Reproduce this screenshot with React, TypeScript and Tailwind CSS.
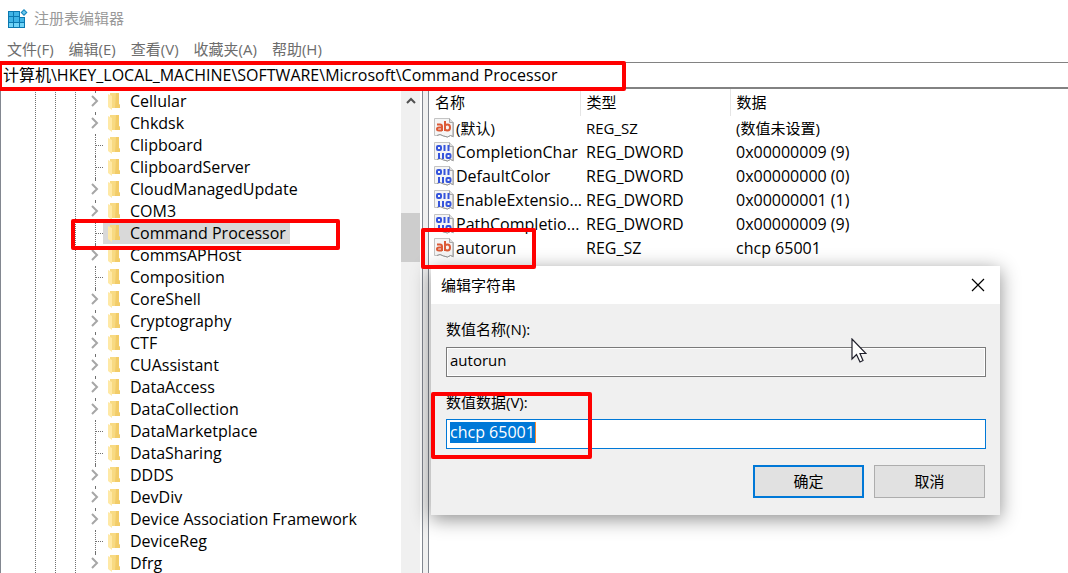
import React from 'react';

interface TreeKey {
  name: string;
  expandable: boolean;
  selected?: boolean;
}

interface RegistryValue {
  name: string;
  kind: 'string' | 'binary';
  type: string;
  data: string;
}

const menus = ['文件(F)', '编辑(E)', '查看(V)', '收藏夹(A)', '帮助(H)'];

const treeKeys: TreeKey[] = [
  { name: 'Cellular', expandable: true },
  { name: 'Chkdsk', expandable: true },
  { name: 'Clipboard', expandable: false },
  { name: 'ClipboardServer', expandable: false },
  { name: 'CloudManagedUpdate', expandable: true },
  { name: 'COM3', expandable: true },
  { name: 'Command Processor', expandable: false, selected: true },
  { name: 'CommsAPHost', expandable: true },
  { name: 'Composition', expandable: false },
  { name: 'CoreShell', expandable: true },
  { name: 'Cryptography', expandable: true },
  { name: 'CTF', expandable: true },
  { name: 'CUAssistant', expandable: true },
  { name: 'DataAccess', expandable: true },
  { name: 'DataCollection', expandable: true },
  { name: 'DataMarketplace', expandable: false },
  { name: 'DataSharing', expandable: false },
  { name: 'DDDS', expandable: true },
  { name: 'DevDiv', expandable: true },
  { name: 'Device Association Framework', expandable: true },
  { name: 'DeviceReg', expandable: false },
  { name: 'Dfrg', expandable: true },
];

const defaultValue: RegistryValue = { name: '(默认)', kind: 'string', type: 'REG_SZ', data: '(数值未设置)' };

const values: RegistryValue[] = [
  { name: 'CompletionChar', kind: 'binary', type: 'REG_DWORD', data: '0x00000009 (9)' },
  { name: 'DefaultColor', kind: 'binary', type: 'REG_DWORD', data: '0x00000000 (0)' },
  { name: 'EnableExtensio...', kind: 'binary', type: 'REG_DWORD', data: '0x00000001 (1)' },
  { name: 'PathCompletio...', kind: 'binary', type: 'REG_DWORD', data: '0x00000009 (9)' },
  { name: 'autorun', kind: 'string', type: 'REG_SZ', data: 'chcp 65001' },
];

const RegeditIcon = () => (
  <svg width="20" height="20" viewBox="0 0 20 20" className="shrink-0">
    <path d="M0 2h12v6h5v11H0z" fill="#0b78b0" />
    <g fill="#3fb4e6">
      <path d="M1 3h4v4H1zM6 3h5v4H6zM1 8h4v5H1zM6 8h5v5H6zM12 9h4v4h-4z" />
    </g>
    <g fill="#6fd3f7">
      <path d="M1 14h4v4H1zM6 14h5v4H6zM12 14h4v4h-4z" />
    </g>
    <path d="M16 0l3.500 3.500L16 7l-3.500-3.500z" fill="#1287c0" />
    <path d="M16 1.500l2 2-2 2-2-2z" fill="#6fc8ec" />
  </svg>
);

const FolderIcon = () => (
  <svg width="13" height="17" viewBox="0 0 13 17" className="shrink-0">
    <path d="M2 0h9v11l1 1v3H2z" fill="#f8da82" />
    <path d="M8 0h3v11l1 1v3H7z" fill="#f2cc68" />
    <path d="M0 1l4 2v14l-4-3z" fill="#ffe9a6" />
  </svg>
);

const ChevronIcon = () => (
  <svg width="8" height="12" viewBox="0 0 8 12" fill="none" stroke="#a6a6a6" strokeWidth="2">
    <path d="M1 1l5 5-5 5" />
  </svg>
);

const ValueIcon = ({ kind }: { kind: RegistryValue['kind'] }) => (
  <svg width="20" height="20" viewBox="0 0 20 20" className="shrink-0">
    <path d="M.5.5h15l4 4V19l-3-1.500-3 1.500-4-1L6 16.500l-3 1H.5z" fill="#f5f5f5" stroke="#c4c4c4" />
    <path d="M15.500.5v4h4" fill="#ddd" stroke="#a8a8a8" />
    <path d="M19 5v13.500l-2.500-1-3 1.500-4-1L6 16.500l-3 1" fill="none" stroke="#999" />
    {kind === 'string' ? (
      <g fill="none" stroke="#dc5a36" strokeWidth="2">
        <path d="M3 6.500h3q2 0 2 2V13M8 9.500H5q-2 0-2 1.500t2 1.500h3" />
        <path d="M11 3v10M11 7.500q1-1 2.500-1 2.500 0 2.500 3t-2.500 3q-1.500 0-2.500-1" />
      </g>
    ) : (
      <g fill="none" stroke="#3655dc" strokeWidth="2">
        <rect x="3" y="4" width="4" height="4" rx="1" />
        <path d="M10.500 3v6M14.500 3v6M5 11v6M9 11v6" />
        <rect x="12.500" y="12" width="4" height="4" rx="1" />
      </g>
    )}
  </svg>
);

const CursorIcon = () => (
  <svg width="16" height="25" viewBox="0 0 16 25" className="pointer-events-none absolute left-[420px] top-[72px]">
    <path
      d="M1 1v20l4.500-4.500L9 24l3-1.500L9 15.500h6z"
      fill="#fff"
      stroke="#1e1e2a"
      strokeWidth="1.200"
    />
  </svg>
);

// red frame laid over the part of the window it points out
const Highlight = ({ className }: { className: string }) => (
  <div className={`pointer-events-none absolute z-20 rounded-xs border-4 border-[#ff0000] ${className}`} />
);

const TreeRow = ({ item }: { item: TreeKey }) => (
  <li className="flex h-[22px] items-center pl-[90px]">
    <span className="relative flex h-full w-[12px] shrink-0 items-center">
      {item.expandable ? (
        <>
          <span className="absolute left-[4px] top-0 h-[2px] border-l border-dotted border-[#707070]" />
          <ChevronIcon />
        </>
      ) : (
        <>
          <span className="absolute left-[4px] top-0 h-full border-l border-dotted border-[#707070]" />
          <span className="absolute left-[5px] w-[7px] border-t border-dotted border-[#707070]" />
        </>
      )}
    </span>
    <span className={`flex h-full items-center gap-[9px] pl-[5px] pr-1 ${item.selected ? 'bg-[#d9d9d9]' : ''}`}>
      <FolderIcon />
      {item.name}
    </span>
  </li>
);

const KeyTree = () => (
  <div className="flex w-[423px] shrink-0 overflow-hidden border-x border-[#828790] bg-white">
    <div className="relative min-w-0 flex-1">
      <div className="absolute inset-y-0 left-[34px] w-[41px] border-x border-dotted border-[#707070]" />
      <div className="absolute inset-y-0 left-[54px] border-l border-dotted border-[#707070]" />
      <ul className="relative pt-[1px] text-base leading-[22px]">
        {treeKeys.map((item) => (
          <TreeRow key={item.name} item={item} />
        ))}
      </ul>
    </div>
    <div className="mr-[2px] flex w-[19px] flex-col items-center bg-[#f0f0f0]">
      <svg width="10" height="20" viewBox="0 0 10 20" fill="none" stroke="#505050" strokeWidth="2">
        <path d="M1 14l4-4 4 4" />
      </svg>
      <div className="mt-[104px] h-[49px] w-full bg-[#cdcdcd]" />
    </div>
  </div>
);

const ValueRow = ({ value }: { value: RegistryValue }) => (
  <tr className="h-[24px]">
    <td className="pl-[5px]">
      <div className="flex items-center gap-[2px] whitespace-nowrap">
        <ValueIcon kind={value.kind} />
        {value.name}
      </div>
    </td>
    <td className="pl-[6px]">{value.type}</td>
    <td className="pl-[6px]">{value.data}</td>
  </tr>
);

const ValueList = () => (
  <table className="w-full table-fixed text-left">
    <colgroup>
      <col className="w-[151px]" />
      <col className="w-[150px]" />
      <col />
    </colgroup>
    <thead>
      <tr className="h-[27px]">
        <th className="border-r border-[#e5e5e5] pl-[6px] font-normal">名称</th>
        <th className="border-r border-[#e5e5e5] pl-[6px] font-normal">类型</th>
        <th className="pl-[6px] font-normal">数据</th>
      </tr>
    </thead>
    <tbody>
      <ValueRow value={defaultValue} />
    </tbody>
    <tbody className="text-base leading-[22px]">
      {values.map((value) => (
        <ValueRow key={value.name} value={value} />
      ))}
    </tbody>
  </table>
);

const EditStringDialog = () => (
  <div
    role="dialog"
    aria-label="编辑字符串"
    className="absolute left-[2px] top-[177px] z-10 w-[569px] bg-[#f0f0f0] shadow-[0_4px_18px_rgba(0,0,0,0.45)]"
  >
    <div className="flex h-[38px] items-center justify-between bg-white pl-[10px] pr-[15px]">
      <h2>编辑字符串</h2>
      <button type="button" aria-label="关闭">
        <svg width="14" height="14" viewBox="0 0 14 14" stroke="#000" strokeWidth="1.200">
          <path d="M1 1l12 12M13 1L1 13" />
        </svg>
      </button>
    </div>
    <form className="pb-[17px] pl-[15px] pr-[14px] pt-[14px]" onSubmit={(e) => e.preventDefault()}>
      <label htmlFor="valueName" className="block h-[29px] leading-[22px]">
        数值名称(N):
      </label>
      <input
        id="valueName"
        type="text"
        readOnly
        defaultValue="autorun"
        className="block h-[30px] w-full border border-[#7a7a7a] bg-[#f0f0f0] px-[3px] pb-[4px] shadow-[inset_0_0_0_1px_#fff] outline-none"
      />
      <label htmlFor="valueData" className="mt-[14px] block h-[28px] leading-[22px]">
        数值数据(V):
      </label>
      <div className="relative">
        <input
          id="valueData"
          type="text"
          defaultValue="chcp 65001"
          className="block h-[30px] w-full border border-[#0078d7] bg-white px-[3px] pb-[4px] text-base outline-none"
        />
        <span
          aria-hidden="true"
          className="absolute left-[4px] top-[3px] h-[21px] border-r border-[#ff8728] bg-[#0078d7] text-base leading-[21px] text-white"
        >
          chcp 65001
        </span>
      </div>
      <div className="mt-4 flex justify-end gap-[10px] pr-[1px]">
        <button type="submit" className="h-[33px] w-[111px] border-2 border-[#0078d7] bg-[#e1e1e1]">
          确定
        </button>
        <button type="button" className="h-[33px] w-[111px] border border-[#adadad] bg-[#e1e1e1]">
          取消
        </button>
      </div>
    </form>
    <CursorIcon />
    <Highlight className="left-0 top-[126px] h-[67px] w-[161px]" />
  </div>
);

const App: React.FC = () => {
  return (
    <div className="flex h-screen flex-col overflow-hidden bg-white font-['Open_Sans','Noto_Sans_CJK_SC',sans-serif] text-[15px] leading-[21px] text-black">
      <header className="flex h-[38px] shrink-0 items-center gap-[6px] pl-[8px] text-[#999999]">
        <RegeditIcon />
        <h1 className="pb-[2px]">注册表编辑器</h1>
      </header>
      <nav className="flex h-[24px] shrink-0 items-center gap-[15px] pb-[2px] pl-[7px] text-[#6d6d6d]">
        {menus.map((menu) => (
          <button key={menu} type="button">
            {menu}
          </button>
        ))}
      </nav>
      <div className="relative h-[27px] shrink-0 border-b-2 border-t border-[#828282]">
        <input
          type="text"
          aria-label="地址"
          defaultValue="计算机\HKEY_LOCAL_MACHINE\SOFTWARE\Microsoft\Command Processor"
          className="block h-full w-full px-[3px] pb-[2px] text-base outline-none"
        />
        <Highlight className="-left-[2px] -top-[2px] h-[30px] w-[628px]" />
      </div>
      <main className="relative flex min-h-0 flex-1 bg-[#f0f0f0]">
        <KeyTree />
        <div className="relative ml-[5px] min-w-0 flex-1 border-l border-[#828790] bg-white">
          <ValueList />
          <EditStringDialog />
          <Highlight className="-left-[8px] top-[139px] h-[41px] w-[115px]" />
        </div>
        <Highlight className="left-[71px] top-[130px] h-[31px] w-[269px]" />
      </main>
    </div>
  );
};

export default App;
